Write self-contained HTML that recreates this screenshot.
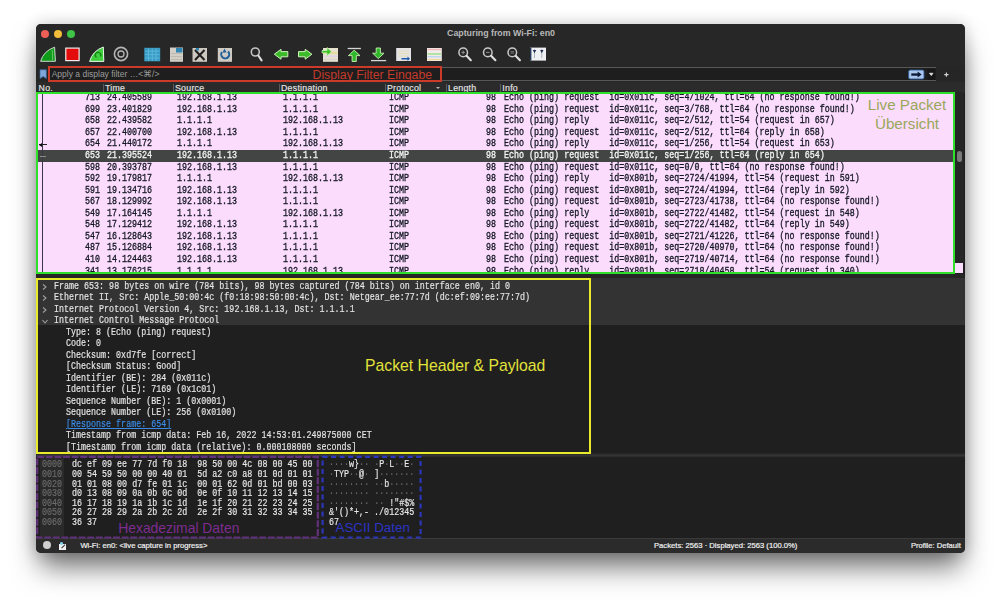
<!DOCTYPE html>
<html><head><meta charset="utf-8">
<style>
*{margin:0;padding:0;box-sizing:border-box}
html,body{width:1000px;height:602px;overflow:hidden;background:#fff;position:relative}
body{font-family:"Liberation Sans",sans-serif}
.a{position:absolute}
.win{position:absolute;left:36px;top:24px;width:928.7px;height:529.4px;background:#1f1f1f;border-radius:5px;box-shadow:0 0 16px 0 rgba(0,0,0,0.2),0 18px 28px -4px rgba(0,0,0,0.55);overflow:hidden}
.m{position:absolute;font-family:"Liberation Mono",monospace;font-size:10.2px;white-space:pre;transform:scaleX(0.8196);transform-origin:0 0;-webkit-text-stroke:0.25px currentColor}
.row{position:absolute;left:0;width:917px;height:11.55px;line-height:11.55px;background:#fcdcfd;color:#141824}
.row .m{-webkit-text-stroke:0.32px currentColor}
.row.sel{background:#434545;color:#f2f2f2}
.row .m{top:0}
.drow{position:absolute;left:0;width:930px;height:11.51px;line-height:11.51px;color:#e4e4e4}
.drow .m,.hx{-webkit-text-stroke:0.18px currentColor}
.drow .m{top:0}
.hx{line-height:9.62px;color:#e8e8e8}
.hx i{font-style:normal;color:#6a6a6a}
.hdr{position:absolute;font-size:8.8px;letter-spacing:0.25px;color:#e6e6e6;line-height:10.5px;-webkit-text-stroke:0.15px currentColor}
</style></head>
<body>
<div class="win">
  <div class="a" style="left:0;top:0;width:930px;height:42px;background:#272727"></div>
  <div class="a" style="left:5px;top:5.5px;width:8px;height:8px;border-radius:50%;background:#ee5f58"></div>
  <div class="a" style="left:18px;top:5.5px;width:8px;height:8px;border-radius:50%;background:#f3bd3a"></div>
  <div class="a" style="left:31px;top:5.5px;width:8px;height:8px;border-radius:50%;background:#3ec447"></div>
  <div class="a" style="left:0;top:4px;width:930px;text-align:center;font-size:8.8px;font-weight:bold;color:#b8b8b8;line-height:11px">Capturing from Wi-Fi: en0</div>
  <!-- filter bar -->
  <div class="a" style="left:0;top:42px;width:930px;height:15.5px;background:#262626"></div>
  <div class="a" style="left:12px;top:43px;width:888px;height:14px;background:#1e1e1e;border-top:1.5px solid #585858;border-bottom:1px solid #585858"></div>
  <div class="a" style="left:15.7px;top:44px;font-size:8.5px;color:#9b9b9b;line-height:12px;white-space:pre">Apply a display filter …&lt;⌘/&gt;</div>
  <!-- header -->
  <div class="a" style="left:0;top:57.50px;width:930px;height:11px;background:#2b2b2b"></div>
  <div class="hdr" style="left:2.60px;top:58.50px">No.</div>
<div class="hdr" style="left:69.00px;top:58.50px">Time</div>
<div class="hdr" style="left:139.00px;top:58.50px">Source</div>
<div class="hdr" style="left:245.00px;top:58.50px">Destination</div>
<div class="hdr" style="left:351.00px;top:58.50px">Protocol</div>
<div class="hdr" style="left:412.00px;top:58.50px">Length</div>
<div class="hdr" style="left:466.30px;top:58.50px">Info</div>
<div class="a" style="left:66.70px;top:59.50px;width:1px;height:8px;background:#5a5a5a"></div>
<div class="a" style="left:137.30px;top:59.50px;width:1px;height:8px;background:#5a5a5a"></div>
<div class="a" style="left:242.50px;top:59.50px;width:1px;height:8px;background:#5a5a5a"></div>
<div class="a" style="left:348.70px;top:59.50px;width:1px;height:8px;background:#5a5a5a"></div>
<div class="a" style="left:409.70px;top:59.50px;width:1px;height:8px;background:#5a5a5a"></div>
<div class="a" style="left:463.70px;top:59.50px;width:1px;height:8px;background:#5a5a5a"></div>
<div class="a" style="left:399.50px;top:63.00px;width:0;height:0;border-left:2.2px solid transparent;border-right:2.2px solid transparent;border-top:2.2px solid #bbb"></div>
  <!-- packet list -->
  <div class="a" style="left:0;top:68.00px;width:917px;height:182px;background:#fcdcfd"></div>
  <div class="row" style="top:68.25px"><span class="m" style="left:48.75px">713</span><span class="m" style="left:70.50px">24.405589</span><span class="m" style="left:141.00px">192.168.1.13</span><span class="m" style="left:246.50px">1.1.1.1</span><span class="m" style="left:352.70px">ICMP</span><span class="m" style="left:450.17px">98</span><span class="m" style="left:467.70px">Echo (ping) request  id=0x011c, seq=4/1024, ttl=64 (no response found!)</span></div>
<div class="row" style="top:79.80px"><span class="m" style="left:48.75px">699</span><span class="m" style="left:70.50px">23.401829</span><span class="m" style="left:141.00px">192.168.1.13</span><span class="m" style="left:246.50px">1.1.1.1</span><span class="m" style="left:352.70px">ICMP</span><span class="m" style="left:450.17px">98</span><span class="m" style="left:467.70px">Echo (ping) request  id=0x011c, seq=3/768, ttl=64 (no response found!)</span></div>
<div class="row" style="top:91.35px"><span class="m" style="left:48.75px">658</span><span class="m" style="left:70.50px">22.439582</span><span class="m" style="left:141.00px">1.1.1.1</span><span class="m" style="left:246.50px">192.168.1.13</span><span class="m" style="left:352.70px">ICMP</span><span class="m" style="left:450.17px">98</span><span class="m" style="left:467.70px">Echo (ping) reply    id=0x011c, seq=2/512, ttl=54 (request in 657)</span></div>
<div class="row" style="top:102.90px"><span class="m" style="left:48.75px">657</span><span class="m" style="left:70.50px">22.400700</span><span class="m" style="left:141.00px">192.168.1.13</span><span class="m" style="left:246.50px">1.1.1.1</span><span class="m" style="left:352.70px">ICMP</span><span class="m" style="left:450.17px">98</span><span class="m" style="left:467.70px">Echo (ping) request  id=0x011c, seq=2/512, ttl=64 (reply in 658)</span></div>
<div class="row" style="top:114.45px"><span class="m" style="left:48.75px">654</span><span class="m" style="left:70.50px">21.440172</span><span class="m" style="left:141.00px">1.1.1.1</span><span class="m" style="left:246.50px">192.168.1.13</span><span class="m" style="left:352.70px">ICMP</span><span class="m" style="left:450.17px">98</span><span class="m" style="left:467.70px">Echo (ping) reply    id=0x011c, seq=1/256, ttl=54 (request in 653)</span></div>
<div class="row sel" style="top:126.00px"><span class="m" style="left:48.75px">653</span><span class="m" style="left:70.50px">21.395524</span><span class="m" style="left:141.00px">192.168.1.13</span><span class="m" style="left:246.50px">1.1.1.1</span><span class="m" style="left:352.70px">ICMP</span><span class="m" style="left:450.17px">98</span><span class="m" style="left:467.70px">Echo (ping) request  id=0x011c, seq=1/256, ttl=64 (reply in 654)</span></div>
<div class="row" style="top:137.55px"><span class="m" style="left:48.75px">598</span><span class="m" style="left:70.50px">20.393787</span><span class="m" style="left:141.00px">192.168.1.13</span><span class="m" style="left:246.50px">1.1.1.1</span><span class="m" style="left:352.70px">ICMP</span><span class="m" style="left:450.17px">98</span><span class="m" style="left:467.70px">Echo (ping) request  id=0x011c, seq=0/0, ttl=64 (no response found!)</span></div>
<div class="row" style="top:149.10px"><span class="m" style="left:48.75px">592</span><span class="m" style="left:70.50px">19.179817</span><span class="m" style="left:141.00px">1.1.1.1</span><span class="m" style="left:246.50px">192.168.1.13</span><span class="m" style="left:352.70px">ICMP</span><span class="m" style="left:450.17px">98</span><span class="m" style="left:467.70px">Echo (ping) reply    id=0x801b, seq=2724/41994, ttl=54 (request in 591)</span></div>
<div class="row" style="top:160.65px"><span class="m" style="left:48.75px">591</span><span class="m" style="left:70.50px">19.134716</span><span class="m" style="left:141.00px">192.168.1.13</span><span class="m" style="left:246.50px">1.1.1.1</span><span class="m" style="left:352.70px">ICMP</span><span class="m" style="left:450.17px">98</span><span class="m" style="left:467.70px">Echo (ping) request  id=0x801b, seq=2724/41994, ttl=64 (reply in 592)</span></div>
<div class="row" style="top:172.20px"><span class="m" style="left:48.75px">567</span><span class="m" style="left:70.50px">18.129992</span><span class="m" style="left:141.00px">192.168.1.13</span><span class="m" style="left:246.50px">1.1.1.1</span><span class="m" style="left:352.70px">ICMP</span><span class="m" style="left:450.17px">98</span><span class="m" style="left:467.70px">Echo (ping) request  id=0x801b, seq=2723/41738, ttl=64 (no response found!)</span></div>
<div class="row" style="top:183.75px"><span class="m" style="left:48.75px">549</span><span class="m" style="left:70.50px">17.164145</span><span class="m" style="left:141.00px">1.1.1.1</span><span class="m" style="left:246.50px">192.168.1.13</span><span class="m" style="left:352.70px">ICMP</span><span class="m" style="left:450.17px">98</span><span class="m" style="left:467.70px">Echo (ping) reply    id=0x801b, seq=2722/41482, ttl=54 (request in 548)</span></div>
<div class="row" style="top:195.30px"><span class="m" style="left:48.75px">548</span><span class="m" style="left:70.50px">17.129412</span><span class="m" style="left:141.00px">192.168.1.13</span><span class="m" style="left:246.50px">1.1.1.1</span><span class="m" style="left:352.70px">ICMP</span><span class="m" style="left:450.17px">98</span><span class="m" style="left:467.70px">Echo (ping) request  id=0x801b, seq=2722/41482, ttl=64 (reply in 549)</span></div>
<div class="row" style="top:206.85px"><span class="m" style="left:48.75px">547</span><span class="m" style="left:70.50px">16.128643</span><span class="m" style="left:141.00px">192.168.1.13</span><span class="m" style="left:246.50px">1.1.1.1</span><span class="m" style="left:352.70px">ICMP</span><span class="m" style="left:450.17px">98</span><span class="m" style="left:467.70px">Echo (ping) request  id=0x801b, seq=2721/41226, ttl=64 (no response found!)</span></div>
<div class="row" style="top:218.40px"><span class="m" style="left:48.75px">487</span><span class="m" style="left:70.50px">15.126884</span><span class="m" style="left:141.00px">192.168.1.13</span><span class="m" style="left:246.50px">1.1.1.1</span><span class="m" style="left:352.70px">ICMP</span><span class="m" style="left:450.17px">98</span><span class="m" style="left:467.70px">Echo (ping) request  id=0x801b, seq=2720/40970, ttl=64 (no response found!)</span></div>
<div class="row" style="top:229.95px"><span class="m" style="left:48.75px">410</span><span class="m" style="left:70.50px">14.124463</span><span class="m" style="left:141.00px">192.168.1.13</span><span class="m" style="left:246.50px">1.1.1.1</span><span class="m" style="left:352.70px">ICMP</span><span class="m" style="left:450.17px">98</span><span class="m" style="left:467.70px">Echo (ping) request  id=0x801b, seq=2719/40714, ttl=64 (no response found!)</span></div>
<div class="row" style="top:241.50px"><span class="m" style="left:48.75px">341</span><span class="m" style="left:70.50px">13.176215</span><span class="m" style="left:141.00px">1.1.1.1</span><span class="m" style="left:246.50px">192.168.1.13</span><span class="m" style="left:352.70px">ICMP</span><span class="m" style="left:450.17px">98</span><span class="m" style="left:467.70px">Echo (ping) reply    id=0x801b, seq=2718/40458, ttl=54 (request in 340)</span></div>
<div class="a" style="left:6.00px;top:69.00px;width:1px;height:180px;background:#3a3848"></div>
<div class="a" style="left:2.50px;top:120.40px;width:8.5px;height:1px;background:#222"></div>
<div class="a" style="left:2.50px;top:118.90px;width:0;height:0;border-right:3px solid #111;border-top:2px solid transparent;border-bottom:2px solid transparent"></div>
<div class="a" style="left:4.00px;top:131.50px;width:6px;height:1px;background:#8a8a8a"></div>
  <div class="a" style="left:919px;top:68.00px;width:9px;height:171px;background:#262626"></div>
  <div class="a" style="left:920.5px;top:126.60px;width:5px;height:11.6px;background:#7a7a7a;border-radius:2.5px"></div>
  <div class="a" style="left:919px;top:239.00px;width:8px;height:10px;background:#fcdcfd"></div>
  <div class="a" style="left:0;top:250.00px;width:930px;height:4.2px;background:#262626"></div>
  <!-- details -->
  <div class="a" style="left:0;top:254.20px;width:930px;height:176px;background:#1f1f1f"></div>
  <div class="a" style="left:0;top:254.20px;width:930px;height:47px;background:#333"></div>
<div class="drow" style="top:256.60px"><span class="m" style="left:17.50px">Frame 653: 98 bytes on wire (784 bits), 98 bytes captured (784 bits) on interface en0, id 0</span></div>
<svg class="a" style="left:6.00px;top:259.90px" width="5" height="6" viewBox="0 0 5 6"><path d="M1 0.5 L4 3 L1 5.5" fill="none" stroke="#a0a0a0" stroke-width="1.1"/></svg>
<div class="drow" style="top:268.11px"><span class="m" style="left:17.50px">Ethernet II, Src: Apple_50:00:4c (f0:18:98:50:00:4c), Dst: Netgear_ee:77:7d (dc:ef:09:ee:77:7d)</span></div>
<svg class="a" style="left:6.00px;top:271.41px" width="5" height="6" viewBox="0 0 5 6"><path d="M1 0.5 L4 3 L1 5.5" fill="none" stroke="#a0a0a0" stroke-width="1.1"/></svg>
<div class="drow" style="top:279.62px"><span class="m" style="left:17.50px">Internet Protocol Version 4, Src: 192.168.1.13, Dst: 1.1.1.1</span></div>
<svg class="a" style="left:6.00px;top:282.92px" width="5" height="6" viewBox="0 0 5 6"><path d="M1 0.5 L4 3 L1 5.5" fill="none" stroke="#a0a0a0" stroke-width="1.1"/></svg>
<div class="drow" style="top:291.13px"><span class="m" style="left:17.50px">Internet Control Message Protocol</span></div>
<svg class="a" style="left:5.50px;top:295.13px" width="6" height="5" viewBox="0 0 6 5"><path d="M0.5 1 L3 4 L5.5 1" fill="none" stroke="#a0a0a0" stroke-width="1.1"/></svg>
<div class="drow" style="top:302.64px"><span class="m" style="left:30.00px">Type: 8 (Echo (ping) request)</span></div>
<div class="drow" style="top:314.15px"><span class="m" style="left:30.00px">Code: 0</span></div>
<div class="drow" style="top:325.66px"><span class="m" style="left:30.00px">Checksum: 0xd7fe [correct]</span></div>
<div class="drow" style="top:337.17px"><span class="m" style="left:30.00px">[Checksum Status: Good]</span></div>
<div class="drow" style="top:348.68px"><span class="m" style="left:30.00px">Identifier (BE): 284 (0x011c)</span></div>
<div class="drow" style="top:360.19px"><span class="m" style="left:30.00px">Identifier (LE): 7169 (0x1c01)</span></div>
<div class="drow" style="top:371.70px"><span class="m" style="left:30.00px">Sequence Number (BE): 1 (0x0001)</span></div>
<div class="drow" style="top:383.21px"><span class="m" style="left:30.00px">Sequence Number (LE): 256 (0x0100)</span></div>
<div class="drow" style="top:394.72px"><span class="m" style="left:30.00px;color:#3b8be6;text-decoration:underline">[Response frame: 654]</span></div>
<div class="drow" style="top:406.23px"><span class="m" style="left:30.00px">Timestamp from icmp data: Feb 16, 2022 14:53:01.249875000 CET</span></div>
<div class="drow" style="top:417.74px"><span class="m" style="left:30.00px">[Timestamp from icmp data (relative): 0.000108000 seconds]</span></div>
  <div class="a" style="left:0;top:428.00px;width:930px;height:7px;background:linear-gradient(#1b1b1b,#343434 50%,#1b1b1b)"></div>
  <!-- hex -->
  <div class="a" style="left:0;top:433.00px;width:930px;height:81px;background:#1f1f1f"></div>
  <div class="a" style="left:4.40px;top:434.00px;width:23.2px;height:79px;background:#2a2a2a"></div>
<span class="m hx" style="left:5.50px;top:436.30px;color:#6c6c6c">0000</span>
<span class="m hx" style="left:36.00px;top:436.30px">dc ef 09 ee 77 7d f0 18  98 50 00 4c 08 00 45 00</span>
<span class="m hx" style="left:292.60px;top:436.30px"><i>·</i><i>·</i><i>·</i><i>·</i>w}<i>·</i><i>·</i> <i>·</i>P<i>·</i>L<i>·</i><i>·</i>E<i>·</i></span>
<span class="m hx" style="left:5.50px;top:445.92px;color:#6c6c6c">0010</span>
<span class="m hx" style="left:36.00px;top:445.92px">00 54 59 50 00 00 40 01  5d a2 c0 a8 01 0d 01 01</span>
<span class="m hx" style="left:292.60px;top:445.92px"><i>·</i>TYP<i>·</i><i>·</i>@<i>·</i> ]<i>·</i><i>·</i><i>·</i><i>·</i><i>·</i><i>·</i><i>·</i></span>
<span class="m hx" style="left:5.50px;top:455.54px;color:#6c6c6c">0020</span>
<span class="m hx" style="left:36.00px;top:455.54px">01 01 08 00 d7 fe 01 1c  00 01 62 0d 01 bd 00 03</span>
<span class="m hx" style="left:292.60px;top:455.54px"><i>·</i><i>·</i><i>·</i><i>·</i><i>·</i><i>·</i><i>·</i><i>·</i> <i>·</i><i>·</i>b<i>·</i><i>·</i><i>·</i><i>·</i><i>·</i></span>
<span class="m hx" style="left:5.50px;top:465.16px;color:#6c6c6c">0030</span>
<span class="m hx" style="left:36.00px;top:465.16px">d0 13 08 09 0a 0b 0c 0d  0e 0f 10 11 12 13 14 15</span>
<span class="m hx" style="left:292.60px;top:465.16px"><i>·</i><i>·</i><i>·</i><i>·</i><i>·</i><i>·</i><i>·</i><i>·</i> <i>·</i><i>·</i><i>·</i><i>·</i><i>·</i><i>·</i><i>·</i><i>·</i></span>
<span class="m hx" style="left:5.50px;top:474.78px;color:#6c6c6c">0040</span>
<span class="m hx" style="left:36.00px;top:474.78px">16 17 18 19 1a 1b 1c 1d  1e 1f 20 21 22 23 24 25</span>
<span class="m hx" style="left:292.60px;top:474.78px"><i>·</i><i>·</i><i>·</i><i>·</i><i>·</i><i>·</i><i>·</i><i>·</i> <i>·</i><i>·</i> !&quot;#$%</span>
<span class="m hx" style="left:5.50px;top:484.40px;color:#6c6c6c">0050</span>
<span class="m hx" style="left:36.00px;top:484.40px">26 27 28 29 2a 2b 2c 2d  2e 2f 30 31 32 33 34 35</span>
<span class="m hx" style="left:292.60px;top:484.40px">&amp;&#x27;()*+,- ./012345</span>
<span class="m hx" style="left:5.50px;top:494.02px;color:#6c6c6c">0060</span>
<span class="m hx" style="left:36.00px;top:494.02px">36 37</span>
<span class="m hx" style="left:292.60px;top:494.02px">67</span>
  <!-- status bar -->
  <div class="a" style="left:0;top:513.50px;width:930px;height:17px;background:#2b2b2b;border-top:1px solid #3a3a3a"></div>
  <div class="a" style="left:6.9px;top:517.2px;width:8.2px;height:8.2px;border-radius:50%;background:#cfcfcf"></div>
  <div class="a" style="left:22.7px;top:519.8px;width:7.5px;height:6.2px;background:#f2f2f2"></div><div class="a" style="left:24.5px;top:521.5px;width:4.5px;height:1.3px;background:#333;transform:rotate(-45deg)"></div><div class="a" style="left:23.5px;top:517.5px;width:3.5px;height:3px;border-radius:50%;background:#7fd0f0;filter:blur(0.6px)"></div>
  <div class="a" style="left:44.4px;top:516px;font-size:7.65px;color:#f0f0f0;line-height:12px;white-space:pre;-webkit-text-stroke:0.2px #f0f0f0">Wi-Fi: en0: &lt;live capture in progress&gt;</div>
  <div class="a" style="left:618px;top:516px;font-size:7.67px;color:#f0f0f0;line-height:12px;white-space:pre;-webkit-text-stroke:0.2px #f0f0f0">Packets: 2563 · Displayed: 2563 (100.0%)</div>
  <div class="a" style="left:875px;top:516px;font-size:7.6px;color:#f0f0f0;line-height:12px;white-space:pre;-webkit-text-stroke:0.2px #f0f0f0">Profile: Default</div>
</div>
<svg class="a" style="left:0;top:0" width="1000" height="90" viewBox="0 0 1000 90">
 <!-- start capture fin -->
 <path d="M40.6 61.3 Q43.5 51 54.6 47.2 L55.4 61.3 Z" fill="#0f9a1a" stroke="#cfd8cf" stroke-width="1"/>
 <path d="M52.3 50 L52.6 60.5" stroke="#7ccf7c" stroke-width="0.8"/>
 <!-- stop -->
 <rect x="65.8" y="48.1" width="13.3" height="12.5" fill="#e30b0b" stroke="#f3eaea" stroke-width="1.2"/>
 <!-- restart fin -->
 <path d="M89.6 61.4 Q92.5 51 103.3 47 L103.8 61.4 Z" fill="#3fcf3f" stroke="#e8f8e8" stroke-width="1"/>
 <path d="M96.5 57.5 a2.8 2.8 0 1 1 4 -1" fill="none" stroke="#128a12" stroke-width="1.3"/>
 <!-- options -->
 <circle cx="121" cy="54" r="6.6" fill="none" stroke="#b4b4b4" stroke-width="1.6"/>
 <circle cx="121" cy="54" r="3" fill="none" stroke="#b4b4b4" stroke-width="1.3"/>
 <!-- open -->
 <rect x="144.3" y="47.8" width="15.9" height="13.5" fill="#3a9cc4"/>
 <path d="M145 51.2 H159.5 M145 54.6 H159.5 M145 58 H159.5 M148.5 48.5 V61 M152.3 48.5 V61 M156 48.5 V61" stroke="#5cb8dc" stroke-width="0.9"/>
 <!-- save -->
 <rect x="170" y="47.5" width="13" height="14.3" fill="#d2cec8"/>
 <rect x="176" y="48" width="6.5" height="4.5" fill="#2f86b2"/>
 <path d="M171 53.5 H182 M171 56.5 H182 M171 59.5 H182" stroke="#b9b3a8" stroke-width="0.8"/>
 <!-- close -->
 <rect x="192.5" y="48" width="14.5" height="13.8" fill="#cdc8c0"/>
 <path d="M195 50 L204.5 60 M204.5 50 L195 60" stroke="#1e1e1e" stroke-width="2"/>
 <rect x="196" y="48" width="3" height="2.5" fill="#2f86b2"/>
 <!-- reload -->
 <rect x="217.8" y="48" width="14.2" height="13.8" fill="#cfcbc4"/>
 <path d="M222 52 a4 4 0 1 0 6 -0.5" fill="none" stroke="#1f5f9a" stroke-width="2"/>
 <path d="M224.5 48.5 L226.5 52.5 L222.5 52.5 Z" fill="#1f5f9a"/>
 <!-- find -->
 <circle cx="255.3" cy="52" r="4" fill="none" stroke="#c4c4c4" stroke-width="1.6"/>
 <path d="M258.3 55.5 L261.6 60.3" stroke="#dcdcdc" stroke-width="2.1" stroke-linecap="round"/>
 <!-- back -->
 <path d="M274.3 54.2 L281 49.3 L281 51.6 L287.8 51.6 L287.8 56.8 L281 56.8 L281 59.2 Z" fill="#3bbb2a" stroke="#cdf3b8" stroke-width="1"/>
 <!-- forward -->
 <path d="M311.9 54.2 L305.2 49.3 L305.2 51.6 L298.5 51.6 L298.5 56.8 L305.2 56.8 L305.2 59.2 Z" fill="#3bbb2a" stroke="#cdf3b8" stroke-width="1"/>
 <!-- go to packet -->
 <rect x="323" y="48" width="15" height="13.8" fill="#e6e2d0"/>
 <path d="M323.5 53 H337.5" stroke="#e9d98a" stroke-width="1.6"/>
 <path d="M323.5 56.2 H337.5" stroke="#ddd0e8" stroke-width="1.4"/>
 <path d="M323.5 59.4 H337.5" stroke="#d8d4cc" stroke-width="1.4"/>
 <path d="M322 50.5 L327 50.5 L327 47.6 L331.6 51.7 L327 55.8 L327 52.9 L322 52.9 Z" fill="#3fc22c" stroke="#c8f0b0" stroke-width="0.8"/>
 <!-- first packet -->
 <path d="M347.7 48.5 H360.9" stroke="#d6d6d6" stroke-width="1.3"/>
 <path d="M354.2 50.2 L360 55.6 L356.3 55.6 L356.3 61.5 L352.1 61.5 L352.1 55.6 L348.4 55.6 Z" fill="#2fb82a" stroke="#c8f0b0" stroke-width="0.9"/>
 <!-- last packet -->
 <path d="M371 60.6 H386.2" stroke="#d6d6d6" stroke-width="1.3"/>
 <path d="M378.3 58.6 L384 53.2 L380.4 53.2 L380.4 48 L376.2 48 L376.2 53.2 L372.6 53.2 Z" fill="#2fb82a" stroke="#c8f0b0" stroke-width="0.9"/>
 <!-- autoscroll -->
 <rect x="396.2" y="48" width="14.8" height="13" fill="#e4e4e6"/>
 <path d="M398 51 H409 M398 53.5 H409 M398 56 H409" stroke="#e8dcb0" stroke-width="0.9"/>
 <path d="M401.5 58 L407.5 58 L407.5 56.5 L410 58.8 L407.5 61 L407.5 59.6 L401.5 59.6 Z" fill="#1f57a8"/>
 <!-- colorize -->
 <rect x="427" y="48" width="14.8" height="13" fill="#f2ece8"/>
 <path d="M427.5 49.5 H441.3" stroke="#f0b8b8" stroke-width="1.3"/>
 <path d="M427.5 54 H441.3" stroke="#98de88" stroke-width="1.4"/>
 <path d="M427.5 56.8 H441.3" stroke="#b8d4f0" stroke-width="1.3"/>
 <path d="M427.5 59.6 H441.3" stroke="#f0d49a" stroke-width="1.3"/>
 <!-- zoom in/out/normal -->
 <circle cx="463.2" cy="52.4" r="4.3" fill="none" stroke="#c8c8c8" stroke-width="1.5"/>
 <path d="M466.5 55.8 L470.8 60.2" stroke="#e0e0e0" stroke-width="2.1" stroke-linecap="round"/>
 <path d="M461.4 52.4 H465 M463.2 50.6 V54.2" stroke="#9a9a9a" stroke-width="0.9"/>
 <circle cx="487.8" cy="52.4" r="4.3" fill="none" stroke="#c8c8c8" stroke-width="1.5"/>
 <path d="M491.1 55.8 L495.4 60.2" stroke="#e0e0e0" stroke-width="2.1" stroke-linecap="round"/>
 <path d="M486 52.4 H489.6" stroke="#9a9a9a" stroke-width="0.9"/>
 <circle cx="512.3" cy="52.4" r="4.3" fill="none" stroke="#c8c8c8" stroke-width="1.5"/>
 <path d="M515.6 55.8 L519.9 60.2" stroke="#e0e0e0" stroke-width="2.1" stroke-linecap="round"/>
 <path d="M510.5 51.7 H514.1 M510.5 53.1 H514.1" stroke="#9a9a9a" stroke-width="0.7"/>
 <!-- resize columns -->
 <rect x="530" y="47.6" width="16" height="13" fill="#eef0f4"/>
 <rect x="530" y="47.6" width="1.4" height="13" fill="#243a5a"/>
 <path d="M534.5 49 V58 M541.8 49 V58" stroke="#9aa0aa" stroke-width="0.8"/>
 <path d="M532.8 50 L536.2 50 L534.5 53.2 Z M540.1 50 L543.5 50 L541.8 53.2 Z" fill="#203050"/>
 <!-- filter apply / dropdown / plus -->
 <rect x="908.6" y="70" width="15.4" height="9" rx="1.6" fill="#aac6ec" stroke="#2c5a98" stroke-width="0.9"/>
 <rect x="911.3" y="73.4" width="6.8" height="2.3" fill="#0b1836"/>
 <path d="M917.6 71.6 L921.6 74.55 L917.6 77.5 Z" fill="#0b1836"/>
 <rect x="927.5" y="69" width="7.5" height="11" fill="#171717"/>
 <path d="M929.4 73.2 L933.1 73.2 L931.25 75.6 Z" fill="#f0f0f0" stroke="#f0f0f0" stroke-width="0.6" stroke-linejoin="round"/>
 <path d="M944.3 74.6 H948.5 M946.4 72.5 V76.7" stroke="#d8d8d8" stroke-width="1.1"/>
 <!-- bookmark -->
 <path d="M40 69.8 H46.3 V78.6 L43.15 76.4 L40 78.6 Z" fill="#7fa8d8" stroke="#3a6aa8" stroke-width="0.7"/>
</svg>

<!-- annotations -->
<div class="a" style="left:48px;top:66px;width:393.5px;height:16.2px;border:2.2px solid #cc3a2a"></div>
<div class="a" style="left:312.5px;top:68.4px;font-size:12.3px;color:#c43a2c;line-height:14px;white-space:pre">Display Filter Eingabe</div>
<div class="a" style="left:36px;top:91.5px;width:919px;height:182.5px;border:2.2px solid #2fe02a"></div>
<div class="a" style="left:855px;top:96.2px;width:104px;text-align:center;font-size:15.2px;color:#98a85a;line-height:18.8px">Live Packet<br>Übersicht</div>
<div class="a" style="left:36px;top:278px;width:555px;height:176px;border:2px solid #eaea2c"></div>
<div class="a" style="left:365px;top:357px;font-size:15.75px;color:#e2e23a;line-height:18px;white-space:pre">Packet Header &amp; Payload</div>
<svg class="a" style="left:0;top:440px" width="1000" height="110" viewBox="0 440 1000 110">
 <rect x="37.2" y="456.9" width="280.6" height="80.6" fill="none" stroke="#60307a" stroke-width="2.2" stroke-dasharray="7 1.6"/>
 <rect x="322.6" y="456.9" width="98" height="80.6" fill="none" stroke="#2c36b8" stroke-width="2.2" stroke-dasharray="5 3.5"/>
</svg>
<div class="a" style="left:118.2px;top:520.2px;font-size:13.9px;color:#7e2c90;line-height:16px;white-space:pre">Hexadezimal Daten</div>

<div class="a" style="left:335.5px;top:520.2px;font-size:13.4px;color:#2c34c4;line-height:16px;white-space:pre">ASCII Daten</div>
</body></html>
